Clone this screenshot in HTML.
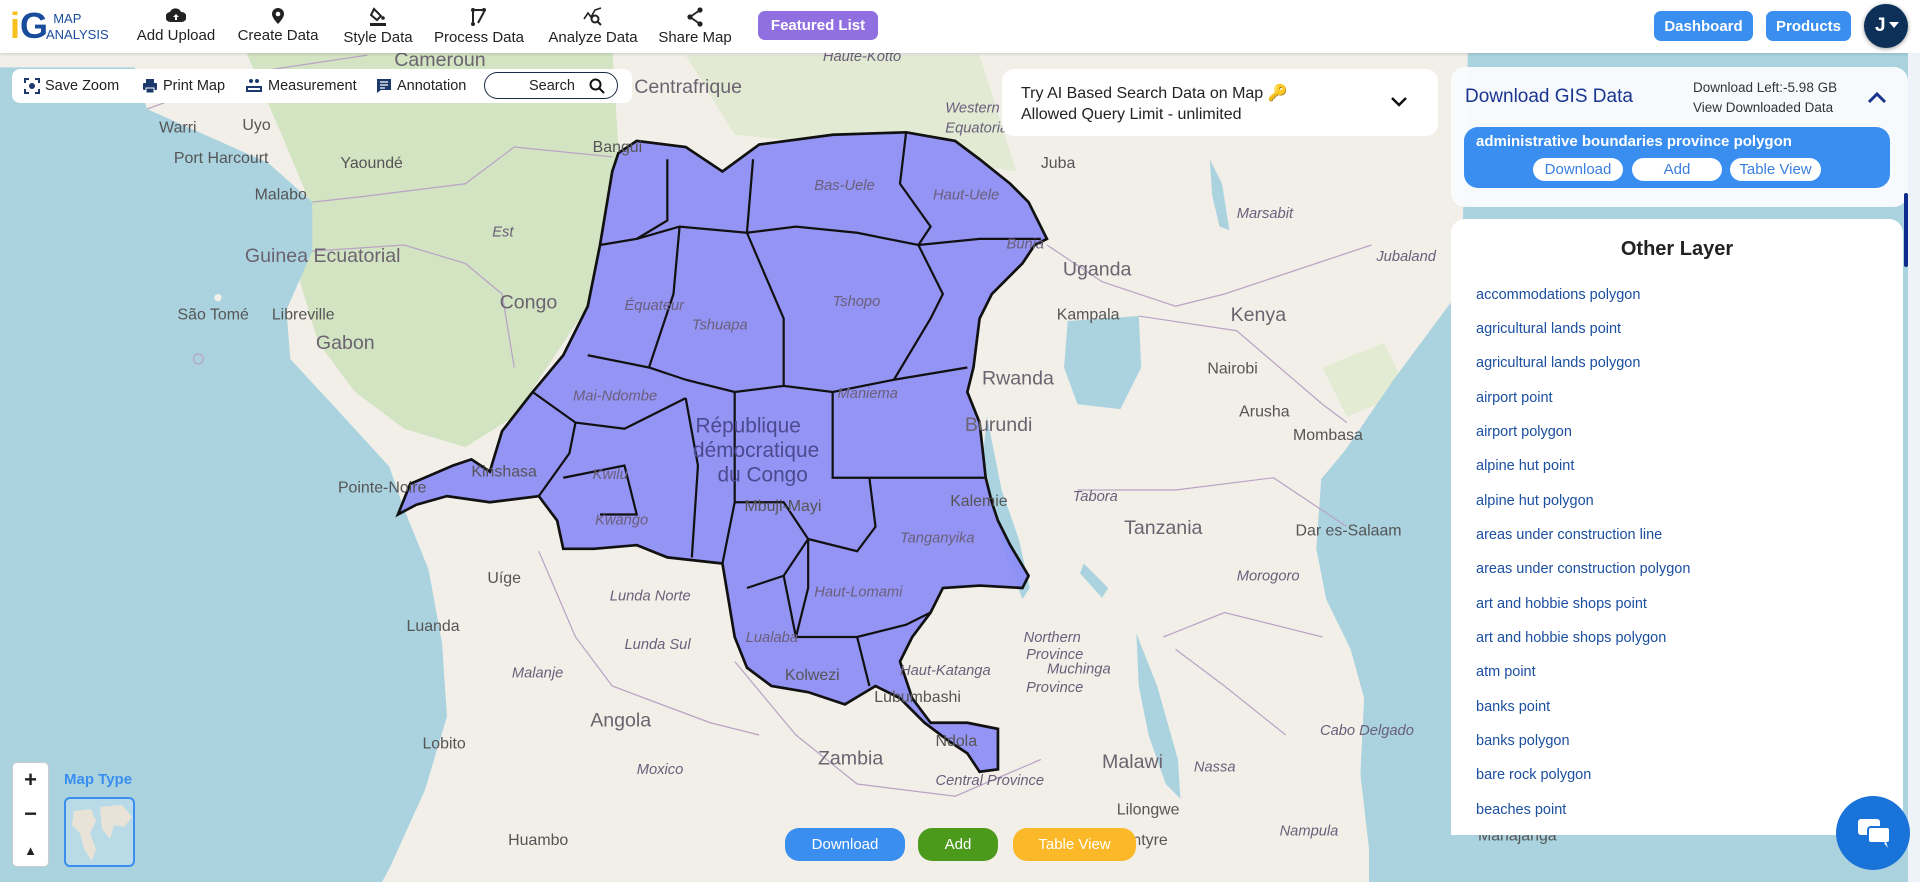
<!DOCTYPE html>
<html><head><meta charset="utf-8">
<style>
*{box-sizing:border-box;margin:0;padding:0}
body{width:1920px;height:882px;overflow:hidden;font-family:"Liberation Sans",sans-serif;position:relative;background:#f2efe9}
#map{position:absolute;left:0;top:0;width:1920px;height:882px}
.hdr{position:absolute;left:0;top:0;width:1920px;height:53px;background:#fff;box-shadow:0 1px 3px rgba(0,0,0,.15)}
.nav{position:absolute;top:0;height:53px;text-align:center;font-size:15px;color:#222}
.nav svg{display:block;margin:7px auto 2px}
.btn{position:absolute;border-radius:7px;color:#fff;font-size:15px;font-weight:bold;display:flex;align-items:center;justify-content:center}
.tool{position:absolute;left:12px;top:69px;width:620px;height:34px;background:#fff;border-radius:8px}
.ti{position:absolute;top:9px;font-size:14.5px;color:#222;display:flex;align-items:center;gap:5px}
.card{position:absolute;background:#fff;border-radius:14px}
.li{position:absolute;left:1476px;font-size:14.5px;color:#1b4fa0}
.bb{position:absolute;top:828px;height:33px;border-radius:14px;color:#fff;font-size:15px;display:flex;align-items:center;justify-content:center}
</style></head><body>
<svg id="map" viewBox="0 0 1568 720" preserveAspectRatio="none" xmlns="http://www.w3.org/2000/svg">
<rect width="1568" height="720" fill="#f2efe9"/>
<path d="M200 40 L500 40 L505 120 L490 200 L480 250 L440 310 L420 340 L380 365 L330 350 L290 320 L260 280 L245 230 L255 170 L230 110 Z" fill="#d3e4c3"/>
<path d="M560 45 L800 45 L830 140 L700 120 L600 110 Z" fill="#e2ead3"/>
<path d="M1080 300 L1130 280 L1150 320 L1100 340 Z" fill="#e3ebd3"/>
<path d="M0 55 L110 55 L120 89 L219 133 L255 165 L255 205 L234 253 L237 293 L274 333 L318 381 L329 413 L350 465 L361 525 L365 585 L347 645 L318 709 L312 720 L0 720 Z" fill="#aad3df"/>
<circle cx="178" cy="243" r="3" fill="#f2efe9"/><circle cx="162" cy="293" r="4" fill="none" stroke="#b9a3c4"/>
<path d="M1193 236 L1138 310 L1099 367 L1079 391 L1075 448 L1083 489 L1103 530 L1114 570 L1111 632 L1118 693 L1118 720 L1568 720 L1568 0 L1200 0 Z" fill="#aad3df"/>
<path d="M872 262 L930 258 L932 300 L915 334 L880 330 L869 300 Z" fill="#aad3df"/>
<path d="M988 130 L998 150 L1004 188 L996 185 L990 160 Z" fill="#aad3df"/>
<path d="M806 340 L818 400 L832 440 L841 480 L835 489 L822 455 L810 410 L803 370 Z" fill="#aad3df"/>
<path d="M928 517 L945 560 L962 620 L964 652 L952 640 L938 600 L930 560 Z" fill="#aad3df"/>
<path d="M885 460 L905 480 L900 488 L882 468 Z" fill="#aad3df"/>
<g fill="none" stroke="#b9a3c4" stroke-width="1">
<path d="M120 89 L200 60 L300 45"/><path d="M255 165 L300 160 L380 150 L420 120 L500 128"/>
<path d="M255 205 L330 200 L380 215 L410 240 L420 300"/><path d="M855 200 L900 230 L960 250 L1000 240 L1120 200"/>
<path d="M930 258 L1010 270 L1080 330 L1100 345"/><path d="M880 400 L960 400 L1040 390 L1100 430"/><path d="M600 540 L650 600 L700 640 L780 650 L850 620"/>
<path d="M440 450 L470 520 L500 560 L580 590 L620 600"/><path d="M960 530 L1000 560 L1050 600"/><path d="M950 520 L1000 500 L1080 520"/>
</g>
<path d="M505 125 L520 115 L560 120 L590 140 L620 118 L680 110 L740 108 L780 115 L800 130 L825 150 L840 165 L855 195 L845 200 L835 215 L810 240 L800 260 L795 300 L790 320 L800 345 L805 390 L810 410 L815 425 L825 445 L840 470 L835 480 L800 478 L770 480 L760 500 L745 520 L735 540 L745 570 L760 590 L790 590 L815 595 L815 628 L800 630 L790 615 L775 605 L755 590 L735 570 L715 560 L690 575 L660 565 L630 560 L610 545 L600 520 L595 490 L590 460 L545 455 L520 445 L485 448 L460 448 L455 425 L440 405 L400 410 L365 405 L340 412 L325 420 L335 395 L370 380 L385 375 L400 385 L410 352 L435 320 L460 290 L480 250 L490 200 L495 170 L500 140 Z" fill="#8c8cf5" fill-opacity=".92" stroke="#111" stroke-width="2.2"/>
<g fill="none" stroke="#111" stroke-width="1.8">
<path d="M490 200 L520 195 L555 185 L610 190 L650 185 L700 190 L750 200 L800 195 L850 195"/>
<path d="M545 130 L545 180 L520 195"/><path d="M610 190 L615 130"/><path d="M740 108 L735 150 L760 185 L750 200"/>
<path d="M480 290 L530 300 L560 310 L600 320 L640 315 L680 320 L730 310 L790 300"/>
<path d="M555 185 L550 240 L530 300"/><path d="M610 190 L640 260 L640 315"/><path d="M750 200 L770 240 L760 260 L730 310"/>
<path d="M435 320 L470 345 L510 350 L560 325"/><path d="M470 345 L465 370 L440 405"/>
<path d="M560 325 L570 380 L565 455"/><path d="M600 320 L600 410 L590 460"/><path d="M680 320 L680 390 L720 390 L805 390"/>
<path d="M460 390 L510 380 L520 420 L490 420"/><path d="M600 410 L640 410 L660 440 L640 470 L610 480"/>
<path d="M710 390 L715 430 L700 450 L660 440"/><path d="M640 470 L650 520 L700 520 L740 510 L760 500"/>
<path d="M700 520 L710 560"/><path d="M660 440 L660 480 L650 520"/>
</g>
<g font-family="Liberation Sans" font-size="12" fill="#6a5f7a" font-style="italic">
<text x="665" y="155">Bas-Uele</text><text x="762" y="163">Haut-Uele</text><text x="822" y="203">Bunia</text>
<text x="510" y="253">Équateur</text><text x="565" y="269">Tshuapa</text><text x="680" y="250">Tshopo</text>
<text x="468" y="327">Mai-Ndombe</text><text x="684" y="325">Maniema</text><text x="484" y="391">Kwilu</text>
<text x="486" y="428">Kwango</text><text x="735" y="443">Tanganyika</text><text x="665" y="487">Haut-Lomami</text>
<text x="609" y="524">Lualaba</text><text x="735" y="551">Haut-Katanga</text><text x="672" y="50">Haute-Kotto</text>
<text x="498" y="490">Lunda Norte</text><text x="510" y="530">Lunda Sul</text><text x="418" y="553">Malanje</text>
<text x="836" y="524">Northern</text><text x="838" y="538">Province</text>
<text x="855" y="550">Muchinga</text><text x="838" y="565">Province</text><text x="764" y="641">Central Province</text>
<text x="876" y="409">Tabora</text><text x="1010" y="178">Marsabit</text><text x="1124" y="213">Jubaland</text>
<text x="1010" y="474">Morogoro</text><text x="975" y="630">Nassa</text><text x="1078" y="600">Cabo Delgado</text>
<text x="520" y="632">Moxico</text><text x="772" y="92">Western</text><text x="772" y="108">Equatoria</text>
<text x="402" y="193">Est</text><text x="1045" y="682">Nampula</text>
</g>
<g font-family="Liberation Sans" font-size="13" fill="#555">
<text x="484" y="124">Bangui</text><text x="850" y="137">Juba</text><text x="278" y="137">Yaoundé</text><text x="142" y="133">Port Harcourt</text>
<text x="208" y="163">Malabo</text><text x="145" y="261">São Tomé</text><text x="222" y="261">Libreville</text>
<text x="863" y="261">Kampala</text><text x="986" y="305">Nairobi</text><text x="1012" y="340">Arusha</text><text x="1056" y="359">Mombasa</text>
<text x="276" y="402">Pointe-Noire</text><text x="385" y="389">Kinshasa</text><text x="608" y="417">Mbuji-Mayi</text>
<text x="776" y="413">Kalemie</text><text x="1058" y="437">Dar es-Salaam</text><text x="398" y="476">Uíge</text>
<text x="332" y="515">Luanda</text><text x="641" y="555">Kolwezi</text><text x="714" y="573">Lubumbashi</text>
<text x="764" y="609">Ndola</text><text x="345" y="611">Lobito</text><text x="912" y="665">Lilongwe</text><text x="906" y="690">Blantyre</text>
<text x="1207" y="686">Mahajanga</text><text x="415" y="690">Huambo</text><text x="130" y="108">Warri</text><text x="198" y="106">Uyo</text>
</g>
<g font-family="Liberation Sans" font-size="16" fill="#6b6470">
<text x="322" y="54">Cameroun</text><text x="518" y="76">Centrafrique</text><text x="200" y="214">Guinea Ecuatorial</text>
<text x="258" y="285">Gabon</text><text x="408" y="252">Congo</text><text x="868" y="225">Uganda</text><text x="1005" y="262">Kenya</text>
<text x="802" y="314">Rwanda</text><text x="788" y="352">Burundi</text><text x="918" y="436">Tanzania</text>
<text x="482" y="593">Angola</text><text x="668" y="624">Zambia</text><text x="900" y="627">Malawi</text>
</g>
<g font-family="Liberation Sans" font-size="17" fill="#4a4a90"><text x="568" y="353">République</text><text x="566" y="373">démocratique</text><text x="586" y="393">du Congo</text></g>
</svg>

<div class="hdr"></div>
<div style="position:absolute;left:10px;top:4px;width:110px;height:46px">
<div style="position:absolute;left:0;top:2px;font-size:36px;font-weight:bold;color:#f5c11a;font-family:'Liberation Sans Narrow','Liberation Sans',sans-serif;line-height:40px">i<span style="color:#1a4c9c">G</span></div>
<div style="position:absolute;left:36px;top:7px;font-size:13px;color:#1a4c9c;line-height:16px">&nbsp;&nbsp;MAP<br>ANALYSIS</div></div>
<div class="nav" style="left:130px;width:92px"><svg width="20" height="18" viewBox="0 0 20 18"><path d="M5 15 A5 5 0 0 1 4 5 A6 6 0 0 1 15 5 A5 5 0 0 1 16 15 Z" fill="#222"/><path d="M10 7 L7 10 H9 V13 H11 V10 H13 Z" fill="#fff"/></svg>Add Upload</div>
<div class="nav" style="left:232px;width:92px"><svg width="16" height="18" viewBox="0 0 16 18"><path d="M8 1 A6 6 0 0 1 14 7 C14 11 8 17 8 17 C8 17 2 11 2 7 A6 6 0 0 1 8 1Z" fill="#222"/><circle cx="8" cy="7" r="2.3" fill="#fff"/></svg>Create Data</div>
<div class="nav" style="left:336px;width:84px"><svg width="20" height="20" viewBox="0 0 20 20"><path d="M6 2 L13 9 L9 13 L3 8Z" fill="none" stroke="#222" stroke-width="2"/><circle cx="15" cy="11" r="1.8" fill="#222"/><rect x="2" y="16" width="16" height="3" fill="#222"/></svg>Style Data</div>
<div class="nav" style="left:428px;width:102px"><svg width="20" height="20" viewBox="0 0 20 20"><circle cx="4" cy="3" r="2" fill="#222"/><circle cx="15" cy="3" r="2" fill="#222"/><circle cx="4" cy="17" r="2" fill="#222"/><path d="M4 5 V15 M6 3 H13 M15 5 L9 16" stroke="#222" stroke-width="2" fill="none"/></svg>Process Data</div>
<div class="nav" style="left:540px;width:106px"><svg width="20" height="20" viewBox="0 0 20 20"><path d="M1 12 L5 6 L8 10 L12 3 L18 1" stroke="#222" stroke-width="1.6" fill="none"/><circle cx="12" cy="12" r="3.5" stroke="#222" stroke-width="2" fill="none"/><path d="M14.5 14.5 L18 18" stroke="#222" stroke-width="2"/></svg>Analyze Data</div>
<div class="nav" style="left:652px;width:86px"><svg width="18" height="20" viewBox="0 0 18 20"><circle cx="14" cy="3" r="2.6" fill="#222"/><circle cx="4" cy="10" r="2.6" fill="#222"/><circle cx="14" cy="17" r="2.6" fill="#222"/><path d="M14 3 L4 10 L14 17" stroke="#222" stroke-width="1.8" fill="none"/></svg>Share Map</div>
<div class="btn" style="left:758px;top:11px;width:120px;height:29px;background:#9070e0">Featured List</div>
<div class="btn" style="left:1654px;top:11px;width:99px;height:30px;background:#3a8ef0">Dashboard</div>
<div class="btn" style="left:1766px;top:11px;width:85px;height:30px;background:#3a8ef0">Products</div>
<div style="position:absolute;left:1864px;top:4px;width:44px;height:44px;border-radius:50%;background:#0d3059;color:#fff;font-size:19px;font-weight:bold;line-height:44px;padding-left:11px;box-shadow:0 1px 4px rgba(0,0,0,.4)">J<span style="display:inline-block;margin-left:3px;border:5px solid transparent;border-top:6px solid #fff;vertical-align:-2px"></span></div>

<div class="tool">
<div class="ti" style="left:12px"><svg width="16" height="16" viewBox="0 0 16 16"><path d="M1 5V1H5M11 1H15V5M15 11V15H11M5 15H1V11" stroke="#1b3a6b" stroke-width="2" fill="none"/><circle cx="8" cy="8" r="3" fill="#1b3a6b"/></svg>Save Zoom</div>
<div class="ti" style="left:130px"><svg width="16" height="16" viewBox="0 0 16 16"><rect x="4" y="1" width="8" height="4" fill="#1b3a6b"/><rect x="1" y="5" width="14" height="7" rx="1" fill="#1b3a6b"/><rect x="4" y="10" width="8" height="5" fill="#1b3a6b" stroke="#fff"/></svg>Print Map</div>
<div class="ti" style="left:233px"><svg width="18" height="16" viewBox="0 0 18 16"><circle cx="6" cy="3" r="2" fill="#1b3a6b"/><circle cx="12" cy="3" r="2" fill="#1b3a6b"/><path d="M1 9H17M2 9V14M16 9V14M2 13H16" stroke="#1b3a6b" stroke-width="2" fill="none"/></svg>Measurement</div>
<div class="ti" style="left:364px"><svg width="16" height="16" viewBox="0 0 16 16"><path d="M1 1H15V12H5L1 15Z" fill="#1b3a6b"/><path d="M4 4H12M4 7H12M4 10H9" stroke="#fff" stroke-width="1.3"/></svg>Annotation</div>
<div style="position:absolute;left:472px;top:3px;width:134px;height:27px;border:1.5px solid #1b2a44;border-radius:14px;font-size:14.5px;color:#222;padding:5px 0 0 44px">Search<svg style="position:absolute;right:12px;top:5px" width="16" height="16" viewBox="0 0 16 16"><circle cx="6.5" cy="6.5" r="5" stroke="#111" stroke-width="2" fill="none"/><path d="M10 10L15 15" stroke="#111" stroke-width="2"/></svg></div>
</div>

<div class="card" style="left:1002px;top:69px;width:436px;height:67px;border-radius:12px">
<div style="position:absolute;left:19px;top:14px;font-size:16px;color:#222;line-height:21px">Try AI Based Search Data on Map <span style="color:#e8b020">🔑</span><br>Allowed Query Limit - unlimited</div>
<svg style="position:absolute;left:388px;top:27px" width="18" height="12" viewBox="0 0 18 12"><path d="M2 2L9 9L16 2" stroke="#111" stroke-width="2.5" fill="none"/></svg></div>

<div class="card" style="left:1451px;top:67px;width:457px;height:140px;background:rgba(250,251,253,.96)">
<div style="position:absolute;left:14px;top:19px;font-size:19px;color:#1a3590">Download GIS Data</div>
<div style="position:absolute;left:242px;top:11px;font-size:13.5px;color:#333;line-height:20px">Download Left:-5.98 GB<br>View Downloaded Data</div>
<svg style="position:absolute;left:416px;top:24px" width="20" height="14" viewBox="0 0 20 14"><path d="M2 11L10 3L18 11" stroke="#1a3590" stroke-width="3" fill="none"/></svg>
<div style="position:absolute;left:13px;top:60px;width:426px;height:61px;background:#3a8ef0;border-radius:14px">
<div style="position:absolute;left:12px;top:6px;font-size:15px;font-weight:bold;color:#fff">administrative boundaries province polygon</div>
<div style="position:absolute;left:69px;top:31px;width:90px;height:23px;background:#fff;border-radius:12px;color:#3a7fe0;font-size:15px;text-align:center;line-height:23px">Download</div>
<div style="position:absolute;left:168px;top:31px;width:90px;height:23px;background:#fff;border-radius:12px;color:#3a7fe0;font-size:15px;text-align:center;line-height:23px">Add</div>
<div style="position:absolute;left:266px;top:31px;width:91px;height:23px;background:#fff;border-radius:12px;color:#3a7fe0;font-size:15px;text-align:center;line-height:23px">Table View</div>
</div></div>

<div style="position:absolute;left:1908px;top:53px;width:12px;height:829px;background:#eef3fa"></div>
<div style="position:absolute;left:1451px;top:219px;width:452px;height:616px;background:#fff;border-radius:14px 14px 0 0"></div>
<div style="position:absolute;left:1904px;top:193px;width:4px;height:74px;background:#0d2c8c;border-radius:2px"></div>
<div style="position:absolute;left:1451px;top:238px;width:452px;text-align:center;font-size:20px;font-weight:bold;color:#222">Other Layer</div>
<div class="li" style="top:287px">accommodations polygon</div>
<div class="li" style="top:321px">agricultural lands point</div>
<div class="li" style="top:355px">agricultural lands polygon</div>
<div class="li" style="top:390px">airport point</div>
<div class="li" style="top:424px">airport polygon</div>
<div class="li" style="top:458px">alpine hut point</div>
<div class="li" style="top:493px">alpine hut polygon</div>
<div class="li" style="top:527px">areas under construction line</div>
<div class="li" style="top:561px">areas under construction polygon</div>
<div class="li" style="top:596px">art and hobbie shops point</div>
<div class="li" style="top:630px">art and hobbie shops polygon</div>
<div class="li" style="top:664px">atm point</div>
<div class="li" style="top:699px">banks point</div>
<div class="li" style="top:733px">banks polygon</div>
<div class="li" style="top:767px">bare rock polygon</div>
<div class="li" style="top:802px">beaches point</div>

<div class="bb" style="left:785px;width:120px;background:#3a8ef0">Download</div>
<div class="bb" style="left:918px;width:80px;background:#4c9a1c">Add</div>
<div class="bb" style="left:1013px;width:123px;background:#fbb829">Table View</div>

<div style="position:absolute;left:12px;top:762px;width:37px;height:105px;background:#fff;border-radius:5px;border:1px solid #ccc;text-align:center;font-size:22px;font-weight:bold;color:#222;line-height:34px">+<br>−<br><span style="font-size:13px">▲<br></span></div>
<div style="position:absolute;left:64px;top:771px;font-size:15px;font-weight:bold;color:#3a8ef0">Map Type</div>
<div style="position:absolute;left:64px;top:797px;width:71px;height:70px;border:2px solid #3a8ef0;border-radius:6px;background:#b9dbe8;overflow:hidden"><svg width="71" height="70" viewBox="0 0 71 70"><path d="M8 12 L25 10 L30 22 L24 34 L30 50 L26 62 L18 50 L14 34 L6 26Z M34 8 L56 6 L66 18 L58 28 L48 26 L44 40 L36 30Z" fill="#e8e3d6"/></svg></div>

<div style="position:absolute;left:1836px;top:796px;width:74px;height:74px;border-radius:50%;background:#1a73d9"><svg style="position:absolute;left:20px;top:21px" width="36" height="32" viewBox="0 0 36 32"><rect x="2" y="2" width="22" height="16" rx="3" fill="#fff"/><rect x="12" y="10" width="22" height="16" rx="3" fill="#fff" stroke="#1a73d9" stroke-width="2"/><path d="M28 26 L32 31 L30 25Z" fill="#fff"/></svg></div>
</body></html>
